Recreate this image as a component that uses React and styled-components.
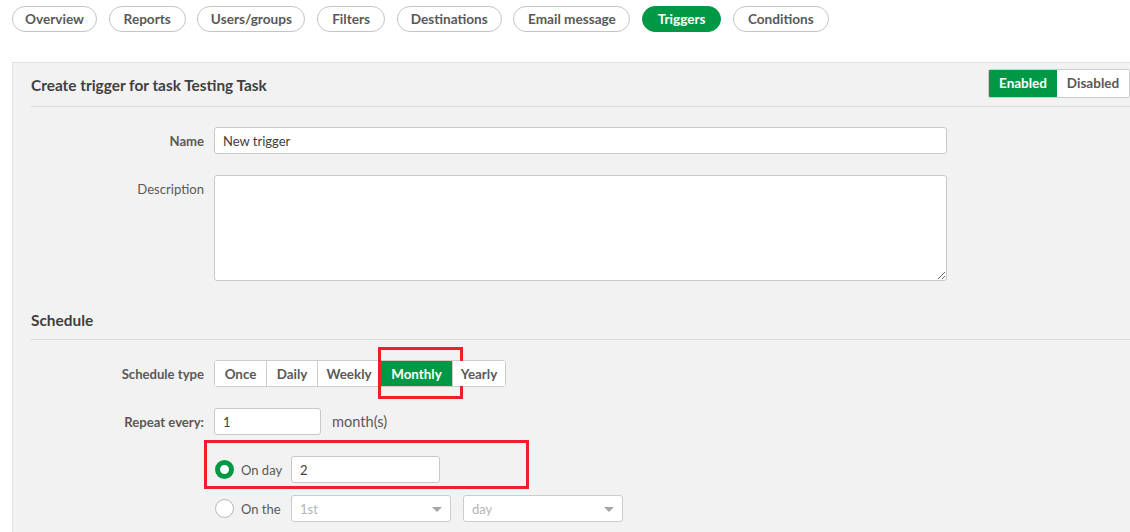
import styled, { createGlobalStyle, css } from "styled-components";

const GREEN = "#009845";

const Global = createGlobalStyle`
  html, body {
    margin: 0;
    padding: 0;
    background: #ffffff;
    overflow: hidden;
    font-family: Lato, "Noto Sans", sans-serif;
    color: #404040;
  }
`;

const Page = styled.div`
  width: 1130px;
  height: 532px;
  overflow: hidden;
`;

const Tabs = styled.nav`
  display: flex;
  gap: 11.7px;
  padding: 6px 0 0 12px;
  height: 26px;
`;

const Tab = styled.button`
  width: ${(p) => p.w}px;
  height: 26px;
  padding: 0;
  border-radius: 13px;
  border: 1px solid #c4c4c4;
  background: #ffffff;
  color: #595959;
  font-family: inherit;
  font-weight: 700;
  font-size: 13.6px;
  cursor: pointer;
  ${(p) =>
    p.active &&
    css`
      background: ${GREEN};
      border-color: ${GREEN};
      color: #ffffff;
    `}
`;

const Panel = styled.section`
  margin: 30px 0 0 12px;
  width: 1140px;
  height: 500px;
  box-sizing: border-box;
  background: #f2f2f2;
  border: 1px solid #e0e0e0;
  padding: 0 0 0 18px;
`;

const HeaderBar = styled.div`
  display: flex;
  align-items: center;
  justify-content: space-between;
  height: 43px;
  margin-right: 21px;
  border-bottom: 1px solid #d9d9d9;
`;

const Heading = styled.h2`
  margin: 0;
  font-size: 15.4px;
  font-weight: 700;
  color: #404040;
`;

const Toggle = styled.div`
  display: flex;
  margin-top: -3px;
  border: 1px solid #cccccc;
  border-radius: 2px;
  overflow: hidden;
`;

const ToggleBtn = styled.button`
  width: ${(p) => p.w}px;
  height: 27px;
  padding: 0;
  border: none;
  font-family: inherit;
  font-size: 13.5px;
  font-weight: 700;
  background: ${(p) => (p.on ? GREEN : "#ffffff")};
  color: ${(p) => (p.on ? "#ffffff" : "#595959")};
`;

const Form = styled.div`
  display: flex;
  flex-direction: column;
  gap: 21px;
  padding-top: 20px;
`;

const Row = styled.div`
  display: flex;
  align-items: ${(p) => (p.top ? "flex-start" : "center")};
  position: relative;
  margin-top: ${(p) => p.mt || 0}px;
`;

const Label = styled.label`
  width: 173px;
  margin-right: 10px;
  text-align: right;
  font-size: 13.1px;
  font-weight: ${(p) => (p.light ? 400 : 700)};
  color: #595959;
  padding-top: ${(p) => (p.top ? "6px" : "0")};
`;

const Input = styled.input`
  box-sizing: border-box;
  width: ${(p) => p.w || 733}px;
  height: 27px;
  border: 1px solid #c8c8c8;
  border-radius: 3px;
  background: #ffffff;
  padding: 0 8px;
  font-family: inherit;
  font-size: 13px;
  color: #404040;
  outline: none;
`;

const TextArea = styled.textarea`
  box-sizing: border-box;
  width: 733px;
  height: 106px;
  border: 1px solid #c8c8c8;
  border-radius: 3px;
  background: #ffffff;
  resize: both;
  font-family: inherit;
  outline: none;
`;

const Section = styled.div`
  margin-top: 19px;
  margin-right: 21px;
  height: 39px;
  display: flex;
  align-items: center;
  border-bottom: 1px solid #d9d9d9;
`;

const Schedule = styled.div`
  display: flex;
  flex-direction: column;
  padding-top: 20px;
`;

const Group = styled.div`
  display: flex;
  border: 1px solid #cccccc;
  border-radius: 3px;
  background: #ffffff;
  height: 27px;
  box-sizing: border-box;
`;

const Seg = styled.button`
  position: relative;
  box-sizing: border-box;
  width: ${(p) => p.w}px;
  height: 25px;
  padding: 0;
  border: none;
  border-left: ${(p) => (p.first ? "none" : "1px solid #cccccc")};
  background: ${(p) => (p.on ? GREEN : "#ffffff")};
  color: ${(p) => (p.on ? "#ffffff" : "#595959")};
  font-family: inherit;
  font-size: 13.4px;
  font-weight: 700;
`;

const Mark = styled.span`
  position: absolute;
  border: 3px solid #ee2027;
  pointer-events: none;
  box-sizing: border-box;
`;

const MonthMark = styled(Mark)`
  left: -3px;
  top: -14px;
  width: 85px;
  height: 52px;
`;

const DayMark = styled(Mark)`
  left: 173px;
  top: -16px;
  width: 325px;
  height: 49px;
`;

const Unit = styled.span`
  margin-left: 11px;
  font-size: 14.6px;
  color: #595959;
`;

const Choice = styled(Row)`
  padding-left: 184px;
`;

const Radio = styled.span`
  width: 19px;
  height: 19px;
  box-sizing: border-box;
  border-radius: 50%;
  background: #ffffff;
  border: ${(p) => (p.on ? `5px solid ${GREEN}` : "1px solid #b8b8b8")};
  margin-right: 7px;
  flex-shrink: 0;
`;

const ChoiceText = styled.span`
  width: 50px;
  font-size: 13px;
  color: #595959;
`;

const Select = styled.div`
  box-sizing: border-box;
  width: ${(p) => p.w}px;
  height: 27px;
  margin-right: ${(p) => p.mr || 0}px;
  border: 1px solid #cccccc;
  border-radius: 3px;
  background: #ffffff;
  display: flex;
  align-items: center;
  justify-content: space-between;
  padding: 0 8px;
  font-size: 13px;
  color: #b5b5b5;
  &::after {
    content: "";
    border-left: 5px solid transparent;
    border-right: 5px solid transparent;
    border-top: 5px solid #a6a6a6;
    margin-top: 2px;
  }
`;

const tabs = [
  ["Overview", 85],
  ["Reports", 77],
  ["Users/groups", 108],
  ["Filters", 68],
  ["Destinations", 105],
  ["Email message", 117],
  ["Triggers", 79],
  ["Conditions", 96],
];

const types = [
  ["Once", 51],
  ["Daily", 51],
  ["Weekly", 63],
  ["Monthly", 72],
  ["Yearly", 53],
];

export default function App() {
  return (
    <Page>
      <Global />
      <Tabs>
        {tabs.map(([t, w]) => (
          <Tab key={t} w={w} active={t === "Triggers"}>
            {t}
          </Tab>
        ))}
      </Tabs>
      <Panel>
        <HeaderBar>
          <Heading>Create trigger for task Testing Task</Heading>
          <Toggle>
            <ToggleBtn w={68} on>
              Enabled
            </ToggleBtn>
            <ToggleBtn w={72}>Disabled</ToggleBtn>
          </Toggle>
        </HeaderBar>
        <Form>
          <Row>
            <Label>Name</Label>
            <Input defaultValue="New trigger" />
          </Row>
          <Row top>
            <Label light top>
              Description
            </Label>
            <TextArea />
          </Row>
        </Form>
        <Section>
          <Heading>Schedule</Heading>
        </Section>
        <Schedule>
          <Row>
            <Label>Schedule type</Label>
            <Group>
              {types.map(([t, w], i) => (
                <Seg key={t} w={w} first={i === 0} on={t === "Monthly"}>
                  {t}
                  {t === "Monthly" && <MonthMark />}
                </Seg>
              ))}
            </Group>
          </Row>
          <Row mt={21}>
            <Label>Repeat every:</Label>
            <Input w={107} defaultValue="1" />
            <Unit>month(s)</Unit>
          </Row>
          <Choice mt={21}>
            <DayMark />
            <Radio on />
            <ChoiceText>On day</ChoiceText>
            <Input w={149} defaultValue="2" />
          </Choice>
          <Choice mt={12}>
            <Radio />
            <ChoiceText>On the</ChoiceText>
            <Select w={160} mr={12}>
              1st
            </Select>
            <Select w={160}>day</Select>
          </Choice>
        </Schedule>
      </Panel>
    </Page>
  );
}
